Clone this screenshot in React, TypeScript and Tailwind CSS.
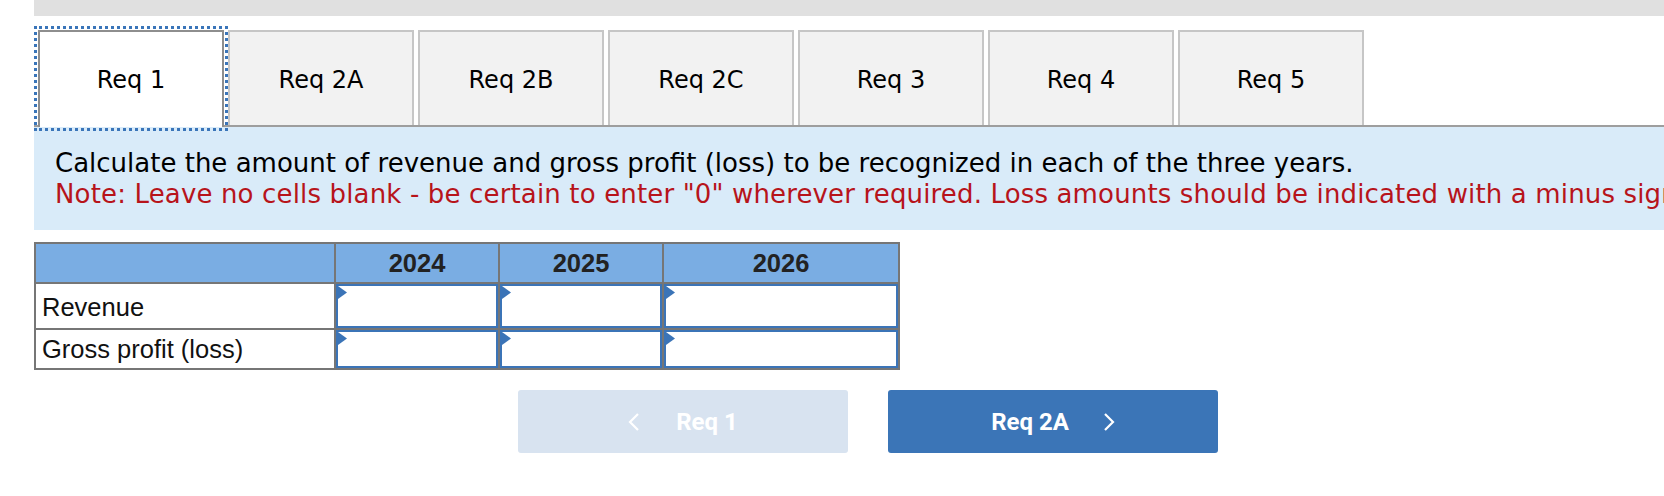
import React from "react";

const tabs = ["Req 1", "Req 2A", "Req 2B", "Req 2C", "Req 3", "Req 4", "Req 5"];

function Tri() {
  return (
    <svg className="absolute left-0 top-0" width="9" height="13" viewBox="0 0 9 13">
      <polygon points="0,0 9,6.5 0,13" fill="#3b74b7" />
    </svg>
  );
}

function InputCell({ h }: { h: string }) {
  return (
    <div className={`bg-white ${h}`}>
      <div className="relative h-full w-full border-2 border-[#3b74b7] bg-white">
        <Tri />
      </div>
    </div>
  );
}

export default function App() {
  const sans = { fontFamily: '"DejaVu Sans", Verdana, sans-serif' };
  const arial = { fontFamily: '"Liberation Sans", Arial, sans-serif' };
  return (
    <div className="w-[1664px] h-[496px] overflow-hidden bg-white">
      <div className="ml-[34px] w-[1668px]">
        <div className="h-[16px] bg-[#e0e0e0]" />
        <div className="flex items-end gap-[4px] pl-[4px] pt-[14px] border-b-2 border-[#9e9e9e]" style={sans}>
          {tabs.map((t, i) =>
            i === 0 ? (
              <div
                key={t}
                className="relative -mb-[2px] flex h-[97px] w-[186px] items-center justify-center border-2 border-b-0 border-[#8e8e8e] bg-white text-[24px] text-black outline-3 outline-dotted outline-[#3a75b9] outline-offset-1"
              >
                <span className="mt-[1px]">{t}</span>
              </div>
            ) : (
              <div
                key={t}
                className="flex h-[95px] w-[186px] items-center justify-center border-2 border-b-0 border-[#c6c6c6] bg-[#f2f2f2] text-[24px] text-black"
              >
                <span className="mt-[3px]">{t}</span>
              </div>
            )
          )}
        </div>
        <div className="h-[103px] bg-[#d9ebf9] pl-[21px] pt-[21px] whitespace-nowrap text-[26px] leading-[31px]" style={sans}>
          <div className="text-black">
            Calculate the amount of revenue and gross profit (loss) to be recognized in each of the three years.
          </div>
          <div className="text-[#b7141b] tracking-[0.15px]">
            Note: Leave no cells blank - be certain to enter "0" wherever required. Loss amounts should be indicated with a minus sign.
          </div>
        </div>
        <div
          className="mt-[12px] grid w-[866px] grid-cols-[298px_162px_162px_234px] gap-[2px] bg-[#767676] p-[2px] text-[25.5px]"
          style={arial}
        >
          <div className="h-[38px] bg-[#7aade3]" />
          {["2024", "2025", "2026"].map((y) => (
            <div key={y} className="flex h-[38px] items-center justify-center bg-[#7aade3] font-bold text-[#222]">
              {y}
            </div>
          ))}
          <div className="flex h-[44px] items-center bg-white pl-[6px] pt-[3px] text-[#111]">Revenue</div>
          <InputCell h="h-[44px]" />
          <InputCell h="h-[44px]" />
          <InputCell h="h-[44px]" />
          <div className="flex h-[38px] items-center bg-white pl-[6px] text-[#111]">Gross profit (loss)</div>
          <InputCell h="h-[38px]" />
          <InputCell h="h-[38px]" />
          <InputCell h="h-[38px]" />
        </div>
        <div className="mt-[20px] flex justify-center gap-[40px]" style={{ fontFamily: 'Roboto, "Noto Sans", sans-serif' }}>
          <div className="flex h-[63px] w-[330px] items-center justify-center gap-[36px] rounded-[3px] bg-[#d8e3f0] text-[24px] font-bold text-white">
            <svg width="12" height="18" viewBox="0 0 12 18" fill="none">
              <polyline points="10,1 2,9 10,17" stroke="white" strokeWidth="2.2" />
            </svg>
            <span>Req 1</span>
          </div>
          <div className="flex h-[63px] w-[330px] items-center justify-center gap-[34px] rounded-[3px] bg-[#3b75b7] text-[24px] font-bold text-white">
            <span>Req 2A</span>
            <svg width="12" height="18" viewBox="0 0 12 18" fill="none">
              <polyline points="2,1 10,9 2,17" stroke="white" strokeWidth="2.2" />
            </svg>
          </div>
        </div>
      </div>
    </div>
  );
}
